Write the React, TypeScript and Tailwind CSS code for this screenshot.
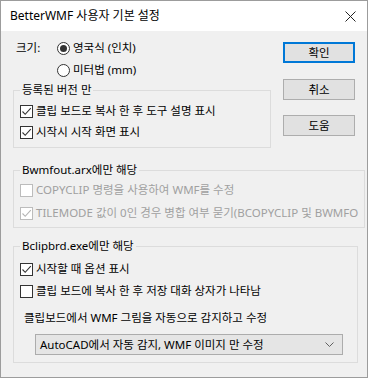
import React from "react";

const FONT = "font-['Noto_Sans','Noto_Sans_CJK_KR',sans-serif]";

function Check({ checked, disabled }: { checked?: boolean; disabled?: boolean }) {
  return (
    <span
      className={`flex h-[13px] w-[13px] shrink-0 items-center justify-center border bg-white ${
        disabled ? "border-[#bcbcbc]" : "border-[#333333]"
      }`}
    >
      {checked && (
        <svg width="11" height="11" viewBox="0 0 11 11">
          <polyline
            points="1.5,5.5 4.2,8.3 9.8,2.2"
            fill="none"
            stroke={disabled ? "#b4b4b4" : "#333333"}
            strokeWidth="1.1"
          />
        </svg>
      )}
    </span>
  );
}

function CheckRow({
  label,
  checked,
  disabled,
  className = "",
}: {
  label: string;
  checked?: boolean;
  disabled?: boolean;
  className?: string;
}) {
  return (
    <div className={`flex h-[18px] items-center gap-[3px] whitespace-nowrap ${className}`}>
      <Check checked={checked} disabled={disabled} />
      <span className={disabled ? "text-[#a0a0a0]" : "text-black"}>{label}</span>
    </div>
  );
}

function Radio({ checked }: { checked?: boolean }) {
  return (
    <span className="flex h-[13px] w-[13px] shrink-0 items-center justify-center rounded-full border border-[#333333] bg-white">
      {checked && <span className="h-[7px] w-[7px] rounded-full bg-[#333333]" />}
    </span>
  );
}

function Btn({ label, primary, className = "" }: { label: string; primary?: boolean; className?: string }) {
  return (
    <div
      className={`flex h-[21px] w-[72px] items-center justify-center bg-[#e1e1e1] ${
        primary ? "border-2 border-[#0078d7]" : "border border-[#adadad]"
      } ${className}`}
    >
      {label}
    </div>
  );
}

function Group({
  title,
  className = "",
  children,
}: {
  title: string;
  className?: string;
  children: React.ReactNode;
}) {
  return (
    <fieldset className={`border border-[#dcdcdc] px-[6px] ${className}`}>
      <legend className="px-[2px] leading-[16px]">{title}</legend>
      {children}
    </fieldset>
  );
}

export default function App() {
  return (
    <div className={`h-[380px] w-[368px] overflow-hidden bg-white text-[11.5px] text-black ${FONT}`}>
      <div className="flex h-[378px] flex-col border border-[#9c9c9c] bg-[#f0f0f0]">
        {/* title bar */}
        <div className="flex h-[30px] shrink-0 items-center justify-between bg-white pl-[9px] pr-[11px]">
          <span className="text-[12px]">BetterWMF 사용자 기본 설정</span>
          <svg width="11" height="11" viewBox="0 0 11 11">
            <path d="M0.5 0.5 L10.5 10.5 M10.5 0.5 L0.5 10.5" stroke="#222" strokeWidth="1" />
          </svg>
        </div>

        <div className="pl-[12px] pr-[9px]">
          <div className="flex items-start">
            <div className="w-[258px]">
              <div className="mt-[8px] flex h-[18px] items-center">
                <span className="ml-[3px] w-[41px]">크기:</span>
                <Radio checked />
                <span className="ml-[3px]">영국식 (인치)</span>
              </div>
              <div className="mt-[4px] flex h-[18px] items-center pl-[44px]">
                <Radio />
                <span className="ml-[3px]">미터법 (mm)</span>
              </div>
              <Group title="등록된 버전 만" className="mt-[3px] pb-[6px]">
                <CheckRow checked label="클립 보드로 복사 한 후 도구 설명 표시" className="mt-[4px]" />
                <CheckRow checked label="시작시 시작 화면 표시" className="mt-[3px]" />
              </Group>
            </div>
            <div className="ml-[12px] flex flex-col pt-[11px]">
              <Btn primary label="확인" />
              <Btn label="취소" className="mt-[16px]" />
              <Btn label="도움" className="mt-[15px]" />
            </div>
          </div>

          <Group title="Bwmfout.arx에만 해당" className="mt-[14px] pb-[5px]">
            <CheckRow disabled label="COPYCLIP 명령을 사용하여 WMF를 수정" className="mt-[3px]" />
            <CheckRow
              disabled
              checked
              label="TILEMODE 값이 0인 경우 병합 여부 묻기(BCOPYCLIP 및 BWMFO"
              className="mt-[5px]"
            />
          </Group>

          <Group title="Bclipbrd.exe에만 해당" className="mt-[10px] pb-[7px]">
            <CheckRow checked label="시작할 때 옵션 표시" className="mt-[6px]" />
            <CheckRow label="클립 보드에 복사 한 후 저장 대화 상자가 나타남" className="mt-[4px]" />
            <div className="ml-[4px] mt-[9px] flex h-[18px] items-center">클립보드에서 WMF 그림을 자동으로 감지하고 수정</div>
            <div className="ml-[15px] mt-[7px] flex h-[21px] w-[308px] items-center justify-between border border-[#acacac] bg-[#e5e5e5] pl-[4px] pr-[8px]">
              <span>AutoCAD에서 자동 감지, WMF 이미지 만 수정</span>
              <svg width="9" height="5" viewBox="0 0 9 5">
                <polyline points="0.5,0.5 4.5,4.5 8.5,0.5" fill="none" stroke="#606060" strokeWidth="1" />
              </svg>
            </div>
          </Group>
        </div>
      </div>
    </div>
  );
}
